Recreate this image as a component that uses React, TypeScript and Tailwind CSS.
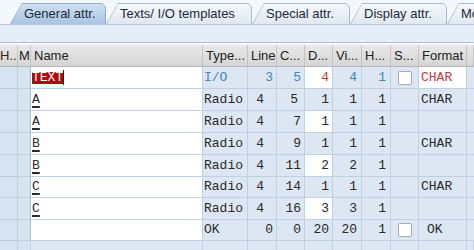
import React from "react";

type Cell = { v?: string; tone?: "blue" | "red"; white?: boolean; pr?: string };

type Row = {
  h: string;
  name?: string;
  type: string;
  typeBlue?: boolean;
  line: Cell;
  c: Cell;
  d: Cell;
  vi: Cell;
  hh: Cell;
  check?: boolean;
  format?: Cell;
};

const rows: Row[] = [
  {
    h: "h-[22px]",
    name: "TEXT",
    type: "I/O",
    typeBlue: true,
    line: { v: "3", tone: "blue", pr: "pr-[3px]" },
    c: { v: "5", tone: "blue", pr: "pr-[3px]" },
    d: { v: "4", tone: "red", white: true },
    vi: { v: "4", tone: "blue" },
    hh: { v: "1", tone: "blue" },
    check: true,
    format: { v: "CHAR", tone: "red", white: true },
  },
  { h: "h-[22px]", name: "A", type: "Radio", line: { v: "4" }, c: { v: "5", pr: "pr-[6px]" }, d: { v: "1" }, vi: { v: "1" }, hh: { v: "1" }, format: { v: "CHAR" } },
  { h: "h-[22px]", name: "A", type: "Radio", line: { v: "4" }, c: { v: "7" }, d: { v: "1", white: true }, vi: { v: "1" }, hh: { v: "1" } },
  { h: "h-[22px]", name: "B", type: "Radio", line: { v: "4" }, c: { v: "9" }, d: { v: "1" }, vi: { v: "1" }, hh: { v: "1" }, format: { v: "CHAR" } },
  { h: "h-[22px]", name: "B", type: "Radio", line: { v: "4" }, c: { v: "11" }, d: { v: "2", white: true }, vi: { v: "2" }, hh: { v: "1" } },
  { h: "h-[21px]", name: "C", type: "Radio", line: { v: "4" }, c: { v: "14" }, d: { v: "1" }, vi: { v: "1" }, hh: { v: "1" }, format: { v: "CHAR" } },
  { h: "h-[22px]", name: "C", type: "Radio", line: { v: "4" }, c: { v: "16" }, d: { v: "3", white: true }, vi: { v: "3" }, hh: { v: "1" } },
  {
    h: "h-[21px]",
    type: "OK",
    line: { v: "0", pr: "pr-[3px]" },
    c: { v: "0", pr: "pr-[3px]" },
    d: { v: "20" },
    vi: { v: "20" },
    hh: { v: "1" },
    check: true,
    format: { v: "OK" },
  },
];

const tabs = [
  { label: "General attr.", w: "w-[96px]", active: true },
  { label: "Texts/ I/O templates", w: "w-[146px]" },
  { label: "Special attr.", w: "w-[98px]" },
  { label: "Display attr.", w: "w-[97px]" },
  { label: "Mode", w: "w-[60px]" },
];

const grid =
  "grid grid-cols-[18px_13px_172px_45px_29px_28px_28px_29px_29px_28px_48px_1fr]";

const cellBase = "border-r border-b border-[#c1d0e0] overflow-hidden whitespace-nowrap flex items-center";

function Num({ cell, pr = "pr-[4px]" }: { cell: Cell; pr?: string }) {
  const color =
    cell.tone === "blue" ? "text-[#3f86b8]" : cell.tone === "red" ? "text-[#c23b3b]" : "text-[#2a2a2a]";
  return (
    <div className={`${cellBase} justify-end ${cell.pr ?? pr} ${cell.white ? "bg-white" : "bg-[#dce7f3]"} ${color}`}>
      {cell.v}
    </div>
  );
}

function Checkbox() {
  return <div className="w-[14px] h-[14px] rounded-[2px] border border-[#a3adb8] bg-white" />;
}

export default function App() {
  return (
    <div className="w-[474px] h-[250px] overflow-hidden bg-[#f4f7fb] [font-family:'Liberation_Sans',Arial,sans-serif] text-[13px] text-[#222]">
      {/* Tab strip */}
      <div className="h-[24px] flex items-end pl-[10px] overflow-hidden">
        {tabs.map((t) => (
          <div
            key={t.label}
            className={`${t.w} shrink-0 h-[21px] [clip-path:polygon(12px_0,calc(100%-4px)_0,100%_4px,100%_100%,0_100%)] ${
              t.active ? "bg-[#8fadcc]" : "bg-[#a9bccf]"
            } pt-[1px] pr-[1px]`}
          >
            <div
              className={`h-full [clip-path:polygon(12px_0,calc(100%-3px)_0,100%_3px,100%_100%,1px_100%)] flex items-center pl-[14px] whitespace-nowrap ${
                t.active
                  ? "bg-gradient-to-b from-[#cfe0f2] to-[#a9c5e3] text-[#1d2a38]"
                  : "bg-gradient-to-b from-[#f4f8fc] to-[#dfe8f2] text-[#1d2a38]"
              }`}
            >
              {t.label}
            </div>
          </div>
        ))}
      </div>

      {/* Toolbar band */}
      <div className="h-[19px] bg-[#e4ecf5] border-t border-[#b3c6da] border-b border-b-[#b4c2d0]" />
      <div className="h-[2px] bg-[#f7f9fc]" />

      {/* Header */}
      <div className={`${grid} h-[22px]`}>
        {["H..", "M", "Name", "Type...", "Line", "C...", "D...", "Vi...", "H...", "S...", "Format", ""].map((h, i) => (
          <div
            key={i}
            className={`border-r border-b border-r-[#c3c3c3] border-b-[#b5b5b5] bg-gradient-to-b from-[#e9e9e9] to-[#d5d5d5] overflow-hidden whitespace-nowrap flex items-center ${
              i === 0 ? "pl-0 text-[#3a2020]" : i === 1 ? "pl-[1px]" : "pl-[3px]"
            }`}
          >
            {h}
          </div>
        ))}
      </div>

      {/* Rows */}
      <div className="[font-family:'Liberation_Mono','Courier_New',monospace] text-[13px] text-[#2a2a2a]">
        {rows.map((r, i) => (
          <div key={i} className={`${grid} ${r.h}`}>
            <div className={`${cellBase} bg-[#d6e3f1]`} />
            <div className={`${cellBase} bg-[#d6e3f1] border-r-[#aebfd1]`} />
            <div className={`${cellBase} bg-white pl-[1px]`}>
              {r.name === "TEXT" ? (
                <span className="flex items-center">
                  <span className="bg-[#b10c0c] text-white leading-[12px] h-[12px] inline-flex items-center">TEXT</span>
                  <span className="w-[1px] h-[15px] bg-[#222]" />
                </span>
              ) : r.name ? (
                <span className="underline decoration-[1.5px] underline-offset-[3px]">{r.name}</span>
              ) : null}
            </div>
            <div className={`${cellBase} bg-[#dce7f3] pl-[1px] ${r.typeBlue ? "text-[#3f86b8]" : ""}`}>{r.type}</div>
            <Num cell={r.line} pr="pr-[12px]" />
            <Num cell={r.c} pr="pr-[3px]" />
            <Num cell={r.d} pr="pr-[3px]" />
            <Num cell={r.vi} />
            <Num cell={r.hh} />
            <div className={`${cellBase} bg-[#dce7f3] justify-center`}>{r.check ? <Checkbox /> : null}</div>
            <div
              className={`${cellBase} ${r.format?.white ? "bg-white" : "bg-[#dce7f3]"} ${
                r.format?.v === "OK" ? "pl-[8px]" : "pl-[2px]"
              } ${r.format?.tone === "red" ? "text-[#c23b3b]" : ""}`}
            >
              {r.format?.v}
            </div>
            <div className={`${cellBase} bg-[#dce7f3] border-r-0`} />
          </div>
        ))}
        <div className={`${grid} h-[22px]`}>
          {Array.from({ length: 12 }).map((_, i) => (
            <div key={i} className={`${cellBase} ${i < 2 ? "bg-[#d6e3f1]" : "bg-[#dce7f3]"}`} />
          ))}
        </div>
      </div>
    </div>
  );
}
